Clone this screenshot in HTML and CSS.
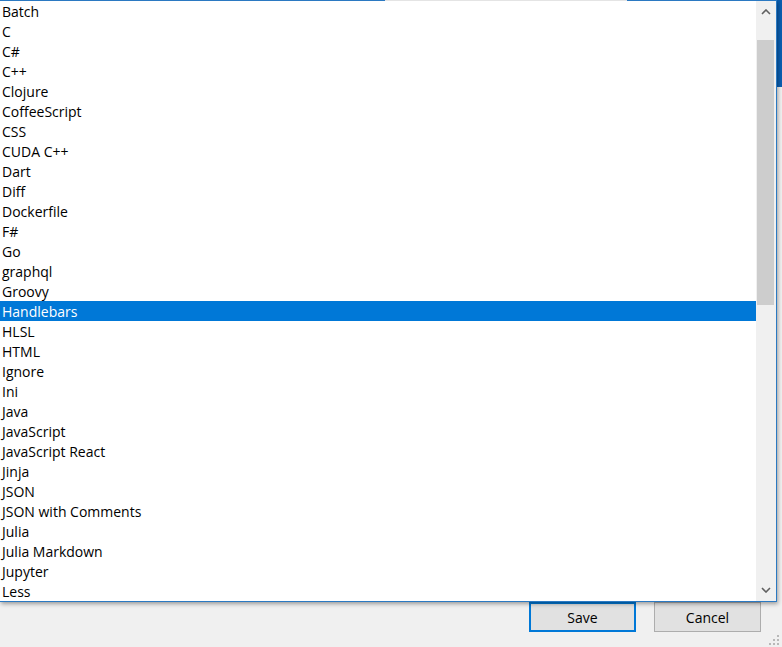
FILE: index.html
```html
<!DOCTYPE html>
<html>
<head>
<meta charset="utf-8">
<link rel="stylesheet" href="styles.css">
</head>
<body>
<div class="dialog">
  <div class="title-strip"></div>
  <div class="footer">
    <button class="btn btn-primary">Save</button>
    <button class="btn">Cancel</button>
  </div>
  <div class="grip">
    <svg width="12" height="12" viewBox="0 0 12 12">
      <rect x="9" y="1" width="2" height="2" fill="#b8b8b8"/>
      <rect x="5" y="5" width="2" height="2" fill="#b8b8b8"/>
      <rect x="9" y="5" width="2" height="2" fill="#b8b8b8"/>
      <rect x="1" y="9" width="2" height="2" fill="#b8b8b8"/>
      <rect x="5" y="9" width="2" height="2" fill="#b8b8b8"/>
      <rect x="9" y="9" width="2" height="2" fill="#b8b8b8"/>
    </svg>
  </div>
</div>

<div class="dropdown">
  <div class="top-edge"></div>
  <div class="dropdown-body">
    <ul class="list">
      <li>Batch</li>
      <li>C</li>
      <li>C#</li>
      <li>C++</li>
      <li>Clojure</li>
      <li>CoffeeScript</li>
      <li>CSS</li>
      <li>CUDA C++</li>
      <li>Dart</li>
      <li>Diff</li>
      <li>Dockerfile</li>
      <li>F#</li>
      <li>Go</li>
      <li>graphql</li>
      <li>Groovy</li>
      <li class="selected">Handlebars</li>
      <li>HLSL</li>
      <li>HTML</li>
      <li>Ignore</li>
      <li>Ini</li>
      <li>Java</li>
      <li>JavaScript</li>
      <li>JavaScript React</li>
      <li>Jinja</li>
      <li>JSON</li>
      <li>JSON with Comments</li>
      <li>Julia</li>
      <li>Julia Markdown</li>
      <li>Jupyter</li>
      <li>Less</li>
    </ul>
    <div class="scrollbar">
      <div class="arrow">
        <svg width="10" height="6" viewBox="0 0 10 6"><polyline points="1,5 5,1 9,5" fill="none" stroke="#606060" stroke-width="1.6"/></svg>
      </div>
      <div class="track">
        <div class="thumb-space-top"></div>
        <div class="thumb"></div>
      </div>
      <div class="arrow">
        <svg width="10" height="6" viewBox="0 0 10 6"><polyline points="1,1 5,5 9,1" fill="none" stroke="#606060" stroke-width="1.6"/></svg>
      </div>
    </div>
  </div>
</div>
</body>
</html>
```

FILE: styles.css
```css
html, body {
  margin: 0;
  padding: 0;
}
body {
  width: 782px;
  height: 647px;
  overflow: hidden;
  background: #f0f0f0;
  font-family: "Open Sans", "Noto Sans", sans-serif;
  position: relative;
}
.dialog {
  height: 647px;
  display: flex;
  flex-direction: column;
  position: relative;
}
.title-strip {
  position: absolute;
  right: 0;
  top: 0;
  width: 5px;
  height: 87px;
  background: #0a5eb0;
}
.footer {
  margin-top: auto;
  display: flex;
  justify-content: flex-end;
  gap: 18px;
  padding: 0 21px 15px 0;
}
.btn {
  box-sizing: border-box;
  width: 107px;
  height: 30px;
  background: #e1e1e1;
  border: 1px solid #adadad;
  font-family: "Open Sans", "Noto Sans", sans-serif;
  font-size: 14px;
  color: #000;
  padding: 0;
}
.btn-primary {
  border: 2px solid #0078d7;
}
.grip {
  position: absolute;
  right: 2px;
  bottom: 1px;
  width: 12px;
  height: 12px;
  line-height: 0;
}
.dropdown {
  position: absolute;
  left: 0;
  top: 0;
  width: 777px;
  height: 602px;
  box-sizing: border-box;
  background: #fff;
  border-right: 1px solid #2b79c2;
  border-bottom: 1px solid #2b79c2;
  box-shadow: 1px 2px 4px rgba(0,0,0,0.35);
  display: flex;
  flex-direction: column;
}
.top-edge {
  height: 1px;
  background: linear-gradient(to right, #2b79c2 0, #2b79c2 385px, #e4e4e4 385px, #e4e4e4 627px, #2b79c2 627px);
}
.dropdown-body {
  flex: 1;
  display: flex;
  min-height: 0;
}
.list {
  list-style: none;
  margin: 0;
  padding: 0;
  flex: 1;
  font-size: 14px;
  color: #000;
}
.list li {
  box-sizing: border-box;
  height: 20px;
  line-height: 20px;
  padding: 1px 0 0 2px;
  white-space: nowrap;
  overflow: hidden;
}
.list li.selected {
  background: #0078d7;
  color: #fff;
}
.scrollbar {
  width: 20px;
  background: #f0f0f0;
  display: flex;
  flex-direction: column;
}
.arrow {
  height: 22px;
  display: flex;
  align-items: center;
  justify-content: center;
  flex: none;
}
.track {
  flex: 1;
  display: flex;
  flex-direction: column;
  padding: 0 2px 0 1px;
}
.thumb-space-top {
  height: 17px;
}
.thumb {
  height: 265px;
  background: #cdcdcd;
}
```
